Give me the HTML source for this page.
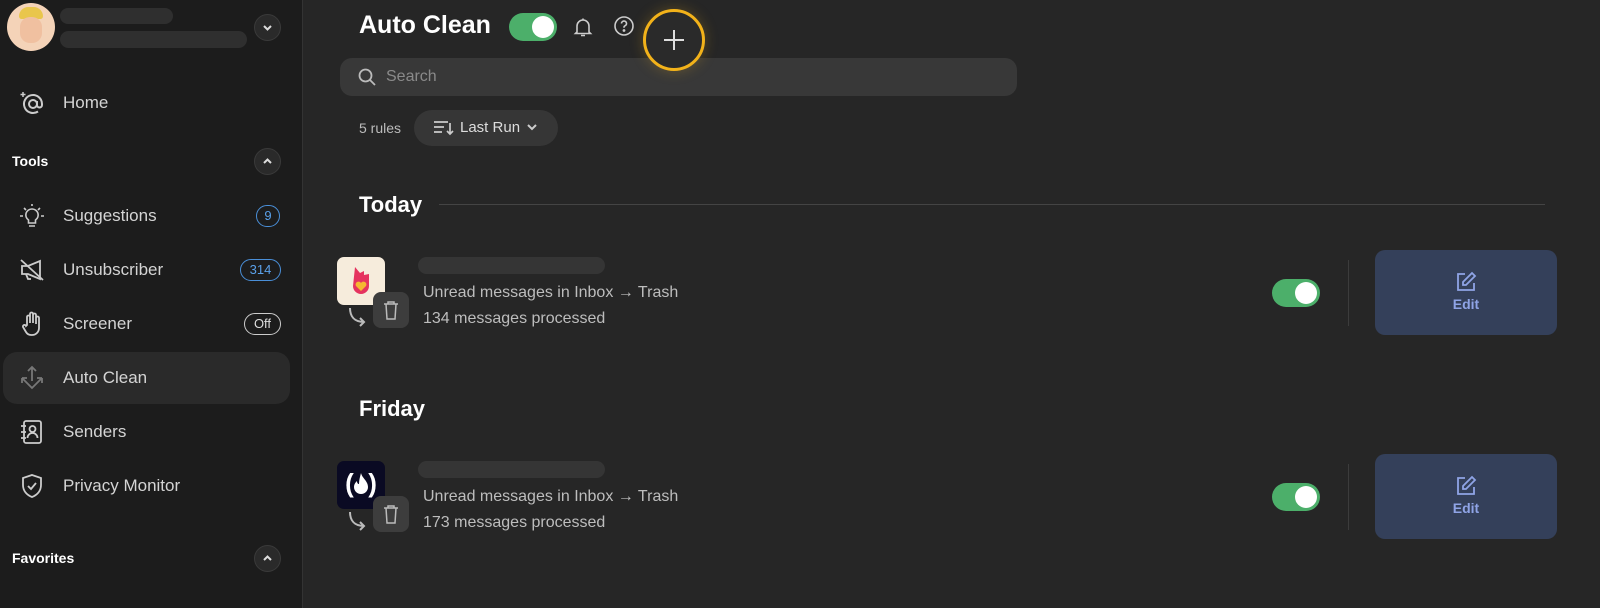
<!DOCTYPE html>
<html><head><meta charset="utf-8"><style>
*{box-sizing:border-box;margin:0;padding:0}
body{width:1600px;height:608px;overflow:hidden;background:#262626;font-family:"Liberation Sans",sans-serif;position:relative;color:#ddd}
.a{position:absolute}
.side{left:0;top:0;width:303px;height:608px;background:#1c1c1c;border-right:1px solid #333}
.bar{background:#2f2f2f;border-radius:9px}
.cb{width:27px;height:27px;border-radius:50%;background:#2a2a2a;border:1px solid #3a3a3a}
.item{left:63px;font-size:17px;color:#d4d4d4;transform:translateY(-50%)}
.ic{left:18px;width:28px;height:28px;transform:translateY(-50%)}
.hd{left:12px;font-size:14px;font-weight:bold;color:#fff;transform:translateY(-50%)}
.badge{border:1.5px solid #4a8fd8;color:#5aa0e8;border-radius:12px;font-size:13px;text-align:center;height:22px;line-height:19px;transform:translateY(-50%)}
.tg{width:48px;height:28px;border-radius:14px;background:#4caf6a}
.tg::after{content:"";position:absolute;right:3px;top:3px;width:22px;height:22px;border-radius:50%;background:#fff}
.rt{font-size:16px;color:#bdbdbd;left:423px;transform:translateY(-50%)}
.edit{width:182px;height:85px;border-radius:10px;background:#34405a;color:#8fa4e6;font-size:14px;font-weight:bold;text-align:center}
.trash{width:36px;height:36px;border-radius:8px;background:#3d3d3d}
</style></head><body>
<div class="a side"></div>
<div class="a" style="left:7px;top:3px;width:48px;height:48px;border-radius:50%;background:#f4d3b8;overflow:hidden">
 <div class="a" style="left:12px;top:4px;width:24px;height:12px;background:#e9c64c;border-radius:10px 10px 3px 3px"></div>
 <div class="a" style="left:13px;top:14px;width:22px;height:26px;background:#f0c0a0;border-radius:10px"></div>
</div>
<div class="a bar" style="left:60px;top:8px;width:113px;height:16px"></div>
<div class="a bar" style="left:60px;top:31px;width:187px;height:17px"></div>
<div class="a cb" style="left:254px;top:14px"><svg width="25" height="25" viewBox="0 0 25 25"><path d="M9 11l3.5 3.5L16 11" fill="none" stroke="#ddd" stroke-width="2"/></svg></div>

<svg class="a ic" style="top:103px" viewBox="0 0 28 28" fill="none" stroke="#ccc" stroke-width="2"><circle cx="15" cy="15" r="4"/><path d="M19 12v4a2.5 2.5 0 0 0 5 0v-1a9 9 0 1 0-4 7.5"/><path d="M5 3v5M2.5 5.5h5" stroke-width="1.5"/></svg>
<div class="a item" style="top:103px">Home</div>
<div class="a hd" style="top:161px">Tools</div>
<div class="a cb" style="left:254px;top:148px"><svg width="25" height="25" viewBox="0 0 25 25"><path d="M9 14l3.5-3.5L16 14" fill="none" stroke="#ddd" stroke-width="2"/></svg></div>

<svg class="a ic" style="top:216px" viewBox="0 0 28 28" fill="none" stroke="#ccc" stroke-width="1.6"><path d="M14 7a6 6 0 0 0-3.5 11v3h7v-3A6 6 0 0 0 14 7z"/><path d="M11 24h6M2 14h3M23 14h3M6 6l2 2M22 6l-2 2M14 2v2"/></svg>
<div class="a item" style="top:216px">Suggestions</div>
<div class="a badge" style="left:256px;top:216px;width:24px">9</div>

<svg class="a ic" style="top:270px" viewBox="0 0 28 28" fill="none" stroke="#ccc" stroke-width="1.8"><path d="M4 10h6l12-5v18l-12-5H4zM8 18l2 5h3"/><path d="M3 4l22 20"/></svg>
<div class="a item" style="top:270px">Unsubscriber</div>
<div class="a badge" style="left:240px;top:270px;width:41px">314</div>

<svg class="a ic" style="top:324px" viewBox="0 0 28 28" fill="none" stroke="#ccc" stroke-width="1.8"><path d="M9 15V7a1.5 1.5 0 0 1 3 0v6V4a1.5 1.5 0 0 1 3 0v9V5a1.5 1.5 0 0 1 3 0v9V8a1.5 1.5 0 0 1 3 0v10a7 7 0 0 1-7 7h-1a6 6 0 0 1-5-3l-3-5a1.5 1.5 0 0 1 3-1z"/></svg>
<div class="a item" style="top:324px">Screener</div>
<div class="a badge" style="left:244px;top:324px;width:37px;border-color:#ccc;color:#ddd">Off</div>

<div class="a" style="left:3px;top:352px;width:287px;height:52px;border-radius:14px;background:#2a2a2a"></div>
<svg class="a ic" style="top:378px" viewBox="0 0 28 28" fill="none" stroke="#777" stroke-width="1.8"><path d="M14 3v14M10 7l4-4 4 4M4 14l10 10 10-10M4 14v5M4 14h5M24 14v5M24 14h-5"/></svg>
<div class="a item" style="top:378px">Auto Clean</div>

<svg class="a ic" style="top:432px" viewBox="0 0 28 28" fill="none" stroke="#ccc" stroke-width="1.8"><rect x="6" y="3" width="17" height="22" rx="2"/><circle cx="14.5" cy="11" r="3"/><path d="M9.5 20a5 5 0 0 1 10 0M3 8h5M3 14h5M3 20h5"/></svg>
<div class="a item" style="top:432px">Senders</div>
<svg class="a ic" style="top:486px" viewBox="0 0 28 28" fill="none" stroke="#ccc" stroke-width="1.8"><path d="M14 3l9 3v7c0 6-4 10-9 12-5-2-9-6-9-12V6z"/><path d="M10 14l3 3 5-6"/></svg>
<div class="a item" style="top:486px">Privacy Monitor</div>
<div class="a hd" style="top:558px">Favorites</div>
<div class="a cb" style="left:254px;top:545px"><svg width="25" height="25" viewBox="0 0 25 25"><path d="M9 14l3.5-3.5L16 14" fill="none" stroke="#ddd" stroke-width="2"/></svg></div>

<!-- main -->
<div class="a" style="left:359px;top:11px;font-size:25px;font-weight:bold;color:#fff">Auto Clean</div>
<div class="a tg" style="left:509px;top:13px"></div>
<svg class="a" style="left:572px;top:16px" width="22" height="22" viewBox="0 0 22 22" fill="none" stroke="#ccc" stroke-width="1.6"><path d="M5 16V10a6 6 0 0 1 12 0v6l1.5 1.5h-15zM9 19.5h4M11 2.5v1.5"/></svg>
<svg class="a" style="left:613px;top:15px" width="22" height="22" viewBox="0 0 22 22" fill="none" stroke="#ccc" stroke-width="1.6"><circle cx="11" cy="11" r="9"/><path d="M8.5 8.5a2.5 2.5 0 1 1 3.5 2.3c-.7.3-1 .8-1 1.5v.5"/><circle cx="11" cy="15.5" r=".6" fill="#ccc"/></svg>

<div class="a" style="left:340px;top:58px;width:677px;height:38px;border-radius:12px;background:#383838"></div>
<svg class="a" style="left:357px;top:67px" width="20" height="20" viewBox="0 0 20 20" fill="none" stroke="#bbb" stroke-width="1.8"><circle cx="8.5" cy="8.5" r="6"/><path d="M13 13l5 5"/></svg>
<div class="a" style="left:386px;top:68px;font-size:16px;color:#8a8a8a">Search</div>

<div class="a" style="left:643px;top:9px;width:62px;height:62px;border-radius:50%;border:3px solid #f2b21a;background:#2a2a2a;box-shadow:0 0 14px rgba(242,178,26,.25)"></div>
<svg class="a" style="left:662px;top:28px" width="24" height="24" viewBox="0 0 24 24" stroke="#ddd" stroke-width="2"><path d="M12 2v20M2 12h20"/></svg>

<div class="a" style="left:359px;top:120px;font-size:14px;color:#bbb">5 rules</div>
<div class="a" style="left:414px;top:110px;width:144px;height:36px;border-radius:18px;background:#363636"></div>
<svg class="a" style="left:432px;top:118px" width="24" height="20" viewBox="0 0 24 20" fill="none" stroke="#ccc" stroke-width="1.7"><path d="M2 4h14M2 9h10M2 14h8M18 5v11M15 13l3 3 3-3"/></svg>
<div class="a" style="left:460px;top:119px;font-size:15px;color:#ddd">Last Run</div>
<svg class="a" style="left:526px;top:122px" width="12" height="10" viewBox="0 0 12 10" fill="none" stroke="#ccc" stroke-width="2"><path d="M2 3l4 4 4-4"/></svg>

<div class="a" style="left:359px;top:192px;font-size:22px;font-weight:bold;color:#fff">Today</div>
<div class="a" style="left:439px;top:204px;width:1106px;height:1px;background:#444"></div>

<!-- row1 -->
<div class="a" style="left:337px;top:257px;width:48px;height:48px;border-radius:7px;background:#f6ecdc"></div>
<svg class="a" style="left:347px;top:263px" width="28" height="36" viewBox="0 0 28 36"><path d="M8 4l5 6 4-2v4l5-1v12a8 8 0 0 1-16 0z" fill="#e5335f"/><path d="M14 28l-5-5a2.5 2.5 0 0 1 5-3 2.5 2.5 0 0 1 5 3z" fill="#f5b731"/></svg>
<svg class="a" style="left:346px;top:306px" width="22" height="24" viewBox="0 0 22 24" fill="none" stroke="#bbb" stroke-width="2"><path d="M4 2c0 8 4 14 14 14M14 12l4 4-4 4"/></svg>
<div class="a trash" style="left:373px;top:292px"></div>
<svg class="a" style="left:381px;top:299px" width="20" height="22" viewBox="0 0 20 22" fill="none" stroke="#bbb" stroke-width="1.5"><path d="M3 5h14M7 5V3h6v2M5 5l1 15h8l1-15"/></svg>
<div class="a bar" style="left:418px;top:257px;width:187px;height:17px;background:#353535"></div>
<div class="a rt" style="top:293px">Unread messages in Inbox → Trash</div>
<div class="a rt" style="top:319px">134 messages processed</div>
<div class="a tg" style="left:1272px;top:279px"></div>
<div class="a" style="left:1348px;top:260px;width:1px;height:66px;background:#3c3c3c"></div>
<div class="a edit" style="left:1375px;top:250px"><svg style="margin-top:21px" width="22" height="22" viewBox="0 0 22 22" fill="none" stroke="#8fa4e6" stroke-width="1.8"><path d="M10 3H3v16h16v-7"/><path d="M17 2l3 3-9 9H8v-3z"/></svg><div>Edit</div></div>

<div class="a" style="left:359px;top:396px;font-size:22px;font-weight:bold;color:#fff">Friday</div>

<!-- row2 -->
<div class="a" style="left:337px;top:461px;width:48px;height:48px;border-radius:7px;background:#0a0a23"></div>
<div class="a" style="left:337px;top:468px;width:48px;text-align:center;color:#fff;font-size:26px;font-weight:bold">(&nbsp;&nbsp;)</div>
<svg class="a" style="left:352px;top:472px" width="18" height="24" viewBox="0 0 18 24"><path d="M9 1c1 5 7 8 7 14a7 7 0 0 1-14 0c0-3 2-5 3-6 0 2 1 3 2 3 0-4 1-7 2-11z" fill="#fff"/></svg>
<svg class="a" style="left:346px;top:510px" width="22" height="24" viewBox="0 0 22 24" fill="none" stroke="#bbb" stroke-width="2"><path d="M4 2c0 8 4 14 14 14M14 12l4 4-4 4"/></svg>
<div class="a trash" style="left:373px;top:496px"></div>
<svg class="a" style="left:381px;top:503px" width="20" height="22" viewBox="0 0 20 22" fill="none" stroke="#bbb" stroke-width="1.5"><path d="M3 5h14M7 5V3h6v2M5 5l1 15h8l1-15"/></svg>
<div class="a bar" style="left:418px;top:461px;width:187px;height:17px;background:#353535"></div>
<div class="a rt" style="top:497px">Unread messages in Inbox → Trash</div>
<div class="a rt" style="top:523px">173 messages processed</div>
<div class="a tg" style="left:1272px;top:483px"></div>
<div class="a" style="left:1348px;top:464px;width:1px;height:66px;background:#3c3c3c"></div>
<div class="a edit" style="left:1375px;top:454px"><svg style="margin-top:21px" width="22" height="22" viewBox="0 0 22 22" fill="none" stroke="#8fa4e6" stroke-width="1.8"><path d="M10 3H3v16h16v-7"/><path d="M17 2l3 3-9 9H8v-3z"/></svg><div>Edit</div></div>
</body></html>
